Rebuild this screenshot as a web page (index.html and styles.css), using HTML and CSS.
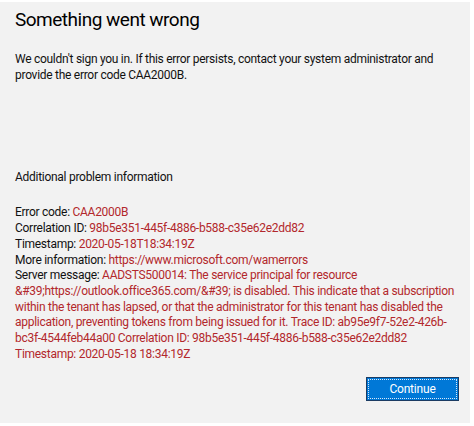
FILE: index.html
```html
<!DOCTYPE html>
<html lang="en">
<head>
<meta charset="utf-8">
<title>Something went wrong</title>
<link rel="stylesheet" href="styles.css">
</head>
<body>
<div class="dialog">
  <h1 class="title">Something went wrong</h1>
  <p class="lead">We couldn't sign you in. If this error persists, contact your system administrator and<br>provide the error code CAA2000B.</p>
  <h2 class="section">Additional problem information</h2>
  <div class="details">
    <div class="row">Error code: <span class="err">CAA2000B</span></div>
    <div class="row">Correlation ID: <span class="err">98b5e351-445f-4886-b588-c35e62e2dd82</span></div>
    <div class="row">Timestamp: <span class="err">2020-05-18T18:34:19Z</span></div>
    <div class="row">More information: <span class="err">https://www.microsoft.com/wamerrors</span></div>
    <div class="row">Server message: <span class="err">AADSTS500014: The service principal for resource<br>&amp;#39;https://outlook.office365.com/&amp;#39; is disabled. This indicate that a subscription<br>within the tenant has lapsed, or that the administrator for this tenant has disabled the<br>application, preventing tokens from being issued for it. Trace ID: ab95e9f7-52e2-426b-<br>bc3f-4544feb44a00 Correlation ID: 98b5e351-445f-4886-b588-c35e62e2dd82<br>Timestamp: 2020-05-18 18:34:19Z</span></div>
  </div>
  <div class="actions">
    <button class="btn"><span class="focus">Continue</span></button>
  </div>
</div>
</body>
</html>
```
FILE: styles.css
```css
html, body {
  margin: 0;
  padding: 0;
  background: #ffffff;
}
body {
  width: 474px;
  height: 426px;
  overflow: hidden;
}
.dialog {
  box-sizing: border-box;
  width: 470px;
  height: 421px;
  margin-top: 2px;
  background: #f2f2f2;
  padding: 5px 15px 0 15px;
  font-family: "Roboto", "Open Sans", sans-serif;
  color: #111111;
  display: flex;
  flex-direction: column;
}
.title {
  margin: 0;
  font-size: 19px;
  font-weight: 400;
  line-height: 26px;
  letter-spacing: -0.5px;
  color: #000;
}
.lead {
  margin: 19px 0 0 0;
  font-size: 12px;
  line-height: 15.7px;
  letter-spacing: -0.28px;
  white-space: nowrap;
}
.section {
  margin: 86px 0 0 0;
  font-size: 12px;
  font-weight: 400;
  line-height: 16px;
  letter-spacing: -0.28px;
}
.details {
  margin-top: 20px;
  font-size: 12px;
  line-height: 15.7px;
  letter-spacing: -0.28px;
  white-space: nowrap;
}
.err {
  color: #b2282c;
}
.actions {
  display: flex;
  justify-content: flex-end;
  margin-top: 15px;
}
.btn {
  box-sizing: border-box;
  width: 93px;
  height: 24px;
  background: #0078d7;
  border: 1px solid #1c3c63;
  padding: 1px;
  margin-right: -4px;
  font-family: inherit;
  font-size: 12px;
  letter-spacing: -0.2px;
  color: #fff;
  display: flex;
}
.focus {
  flex: 1;
  border: 1px dotted #d8e8f8;
  display: flex;
  align-items: center;
  justify-content: center;
}
```
